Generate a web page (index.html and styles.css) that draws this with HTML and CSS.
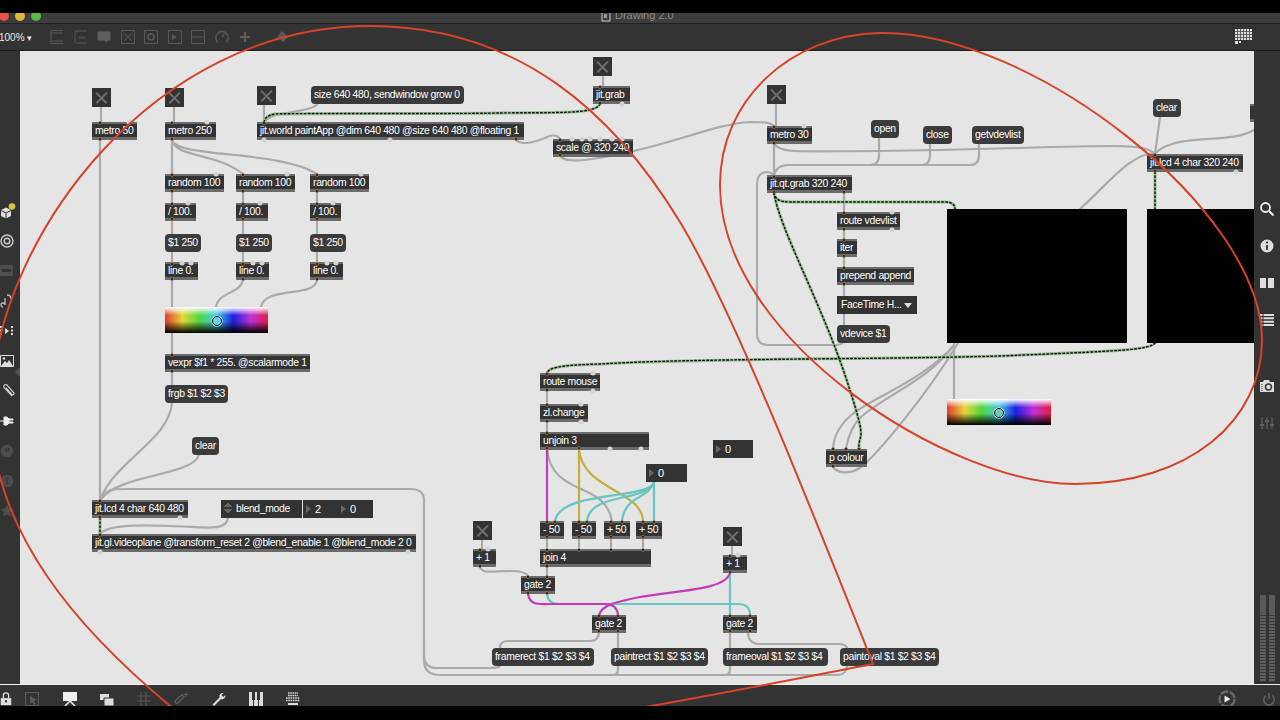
FILE: index.html
```html
<!DOCTYPE html>
<html>
  <head>
    <title>Drawing 2.0</title>
    <link rel="stylesheet" href="styles.css">
  </head>
  <body>
    <div class="app">
      <div class="black-bar top"></div>
      <div class="titlebar">
        <span class="light red"></span>
        <span class="light yellow"></span>
        <span class="light green"></span>
        <span class="title">
          <svg class="doc-icon" viewBox="0 0 10 12"><path d="M1 1h8v10H1z" fill="none" stroke="#ccc"/><path d="M3 4h3v4H3z" fill="#999"/></svg>
          Drawing 2.0
        </span>
      </div>

      <div class="toolbar">
        <div class="zoom">100% <span class="zoom-arrow">&#9662;</span></div>
        <div class="tools">
          <svg viewBox="0 0 14 14"><path d="M1 0.5h12M1 13.5h12M1 3h12M1 11h12M1 0.5v13" fill="none" stroke="#585858"/></svg>
          <svg viewBox="0 0 14 14"><path d="M13 1H3Q1 1 1 3v8q0 2 2 2h10M6 6v3M8 6v3M10 6v3" fill="none" stroke="#585858"/></svg>
          <svg viewBox="0 0 14 14"><path d="M0.5 1.5h13v9h-3l-1 2.500-2-2.500h-7z" fill="#5e5e5e"/></svg>
          <svg viewBox="0 0 14 14"><path d="M0.500 0.500h13v13h-13zM3 3l8 8M11 3l-8 8" fill="none" stroke="#585858"/></svg>
          <svg viewBox="0 0 14 14"><path d="M0.500 0.500h13v13h-13z" fill="none" stroke="#585858"/><circle cx="7" cy="7" r="3" fill="none" stroke="#585858" stroke-width="1.500"/></svg>
          <svg viewBox="0 0 14 14"><path d="M0.500 0.500h13v13h-13z" fill="none" stroke="#585858"/><path d="M4 4l5 3-5 3z" fill="#585858"/></svg>
          <svg viewBox="0 0 14 14"><path d="M0.500 0.500h13v13h-13zM0.500 7h13" fill="none" stroke="#585858"/></svg>
          <svg viewBox="0 0 14 14"><path d="M3 12.500A6.200 6.200 0 1 1 11 12.500M7 7l2.500-3.500" fill="none" stroke="#585858" stroke-width="1.400"/></svg>
          <svg viewBox="0 0 14 14"><path d="M7 2v10M2 7h10" fill="none" stroke="#5e5e5e" stroke-width="2.200"/></svg>
          <svg class="bucket" viewBox="0 0 14 14"><path d="M7 1l6 6-5 5-6-5zM1 6l-1 4h2z" fill="#5a5a5a"/></svg>
        </div>
        <svg class="grid-icon" viewBox="0 0 17 16">
          <path d="M0 0h17v11H0z" fill="#dcdcdc"/>
          <path d="M2.500 0v11M5.500 0v11M8.500 0v11M11.500 0v11M14.500 0v11M0 2.500h17M0 5.500h17M0 8.500h17" stroke="#333" stroke-width="0.700"/>
          <path d="M0 12h3v3H0zM4 12h2v2H4z" fill="#dcdcdc"/>
        </svg>
      </div>

      <div class="main">
        <div class="left-bar">
          <svg viewBox="0 0 16 16"><path d="M1 7l5-2.500 5 2.500-5 2.500zM1 8l4.500 2.200v5L1 13zM11 8l-4.500 2.200v5L11 13z" fill="#ddd"/><circle cx="12" cy="3.500" r="3.300" fill="#d8c53c"/></svg>
          <svg viewBox="0 0 16 16"><circle cx="7" cy="8" r="6" fill="none" stroke="#ccc" stroke-width="1.400"/><circle cx="7" cy="8" r="2.800" fill="none" stroke="#ccc" stroke-width="1.400"/></svg>
          <svg viewBox="0 0 16 16"><path d="M1 3h11v9H1zM1 5h11M1 10h11" fill="none" stroke="#5a5a5a" stroke-width="1.300"/></svg>
          <svg viewBox="0 0 16 16"><path d="M3 14a2 2 0 1 1 2-2V5M7 2c3 0 4 2 4 4" fill="none" stroke="#bbb" stroke-width="1.300"/></svg>
          <svg viewBox="0 0 16 16"><path d="M5 5l4 3-4 3z" fill="#ddd"/><path d="M1 3v10M12 3v10" stroke="#ddd" stroke-width="2" stroke-dasharray="2 1.500"/></svg>
          <svg viewBox="0 0 16 16"><path d="M0.500 2.500h13v11h-13z" fill="none" stroke="#ddd"/><path d="M1 13l4-5 2 2 2-3 4 6z" fill="#ddd"/><circle cx="4" cy="5.500" r="1.200" fill="#ddd"/></svg>
          <svg viewBox="0 0 16 16"><path d="M12 13L4 4.500a2 2 0 0 1 3-2.500l7 8a1.300 1.300 0 0 1-2 1.500L6 5" fill="none" stroke="#ccc" stroke-width="1.200"/></svg>
          <svg viewBox="0 0 16 16"><path d="M0 8h4M4 4h3l2 2h4v1h-4v2h4v1H9l-2 2H4z" fill="#eee" stroke="#eee"/></svg>
          <svg viewBox="0 0 16 16"><circle cx="7" cy="8" r="6.300" fill="#4c4c4c"/><path d="M6 5v4M9 5l-1 3" stroke="#333" stroke-width="1.200"/></svg>
          <svg viewBox="0 0 16 16"><circle cx="7" cy="8" r="6.300" fill="#4c4c4c"/><path d="M5 5h4M7 5v6" stroke="#333" stroke-width="1.200"/></svg>
          <svg viewBox="0 0 16 16"><path d="M7 1.500l1.900 4.300 4.600 0.400-3.500 3 1 4.600-4-2.400-4 2.400 1-4.600-3.500-3 4.600-0.400z" fill="#4f4f4f"/></svg>
          <span class="collapse-left"></span>
        </div>

        <div class="canvas">
          <div class="patch">
            <svg class="wires" viewBox="0 0 1280 720">
              <defs>
                <path id="j1" d="M600 104C595 115 550 112 500 113S290 113 275 114C268 115 265 118 264 122"/>
                <path id="j2" d="M774 193C776 203 785 202 800 202H945Q955 202 955 209"/>
                <path id="j3" d="M774 193C780 230 820 300 845 375S858 430 859 448"/>
                <path id="j4" d="M1155 343C1150 350 1120 351 1000 356 850 360 700 358 600 364 570 365 549 366 547 373"/>
                <path id="j5" d="M1155 172V209"/>
                <path id="j6" d="M100 518V534"/>
              </defs>
              <g class="cord">
                <path d="M101 107V122M100 140V500"/>
                <path d="M174 107V122M172 140V174M172 192V203M172 220V234M172 252V263M172 280V307M172 333V354M172 372V385"/>
                <path d="M172 140C176 158 215 152 243 174M172 140C176 158 280 150 317 174"/>
                <path d="M243 192V203M243 220V234M243 252V263M317 192V203M317 220V234M317 252V263"/>
                <path d="M243 280C240 294 218 292 216 307"/>
                <path d="M317 280C315 298 264 286 261 307"/>
                <path d="M172 402C170 440 115 460 100 500"/>
                <path d="M199 455C192 476 120 474 101 499"/>
                <path d="M103 497C106 490 112 489 125 489H410Q424 489 424 500V655Q424 668 437 668H490Q499 668 500 666"/>
                <path d="M424 640V660Q424 675 440 675H838Q846 675 847 666"/>
                <path d="M618 666V670Q618 675 612 675M730 666V670Q730 675 724 675"/>
                <path d="M228 518C226 532 205 527 170 526 130 524 106 526 100 534"/>
                <path d="M264 105V122"/>
                <path d="M318 103C312 114 270 110 265 122"/>
                <path d="M516 140C522 146 535 142 545 138 552 134 558 135 560 139"/>
                <path d="M560 156C566 164 590 160 620 154 680 142 715 124 750 122 762 122 770 122 774 126"/>
                <path d="M603 77V86M776 104V126M774 144V176"/>
                <path d="M774 144C782 154 800 151 880 151 980 150 1060 146 1115 146 1135 146 1150 148 1155 154"/>
                <path d="M774 176Q776 165 788 165H970Q979 165 979 155V144M879 137V155Q879 165 870 165M930 144V155Q930 165 922 165"/>
                <path d="M774 176C772 172 768 172 766 172 760 173 757 176 757 186V334Q757 345 768 345H835Q842 345 843 342"/>
                <path d="M844 193V212M844 230V239M844 257V267M844 285V296M844 314V325"/>
                <path d="M954 343V399"/>
                <path d="M954 345C930 375 880 395 855 412 842 422 834 434 833 448"/>
                <path d="M954 345C930 380 880 398 860 418 852 426 848 438 846 448"/>
                <path d="M833 467C838 474 850 474 860 468 880 452 930 390 958 343"/>
                <path d="M1080 209C1110 182 1130 154 1155 153"/>
                <path d="M1160 117L1155 154"/>
                <path d="M1254 130C1235 142 1195 136 1172 144 1162 147 1158 150 1155 154"/>
                <path d="M547 391V404M547 422V432"/>
                <path d="M547 449C552 498 605 480 612 521"/>
                <path d="M547 538V549M579 538V549M611 538V549M643 538V549M547 567V576M482 540V549"/>
                <path d="M480 567C482 574 492 571 510 571 520 571 526 572 528 576"/>
                <path d="M732 547V555"/>
                <path d="M599 632Q599 641 590 641H508Q500 641 500 648M618 632V648M730 632V648"/>
                <path d="M748 632Q748 644 760 644H838Q846 644 847 648"/>
              </g>
              <path class="cord-magenta" d="M547 449V521"/>
              <g class="cord-yellow">
                <path d="M579 449V521"/>
                <path d="M579 449C582 490 642 490 643 521"/>
              </g>
              <g class="cord-teal">
                <path d="M654 482C650 500 560 490 555 521"/>
                <path d="M654 482C648 502 590 492 587 521"/>
                <path d="M654 482C648 500 625 495 622 521"/>
                <path d="M654 482V521"/>
                <path d="M547 594Q548 604 560 604H738Q750 604 750 615"/>
                <path d="M730 573V615"/>
              </g>
              <g class="cord-magenta">
                <path d="M528 594C530 606 540 604 550 604H605Q617 604 618 615"/>
                <path d="M730 573C725 590 680 590 640 597 615 602 602 605 599 615"/>
              </g>
              <g class="jitter-base">
                <use href="#j1"/><use href="#j2"/><use href="#j3"/><use href="#j4"/><use href="#j5"/><use href="#j6"/>
              </g>
              <g class="jitter-dots">
                <use href="#j1"/><use href="#j2"/><use href="#j3"/><use href="#j4"/><use href="#j5"/><use href="#j6"/>
              </g>
            </svg>

            <div class="toggle t-a"></div>
            <div class="toggle t-b"></div>
            <div class="toggle t-c"></div>
            <div class="toggle t-d"></div>
            <div class="toggle t-e"></div>
            <div class="toggle t-f"></div>
            <div class="toggle t-g"></div>

            <div class="obj metro-50">metro 50</div>
            <div class="obj metro-250">metro 250</div>
            <div class="msg size-msg">size 640 480, sendwindow grow 0</div>
            <div class="obj jit-world">jit.world paintApp @dim 640 480 @size 640 480 @floating 1</div>
            <div class="obj jit-grab">jit.grab</div>
            <div class="obj scale-obj">scale @ 320 240</div>

            <div class="obj random-a">random 100</div>
            <div class="obj random-b">random 100</div>
            <div class="obj random-c">random 100</div>
            <div class="obj div-a">/ 100.</div>
            <div class="obj div-b">/ 100.</div>
            <div class="obj div-c">/ 100.</div>
            <div class="msg dur-a">$1 250</div>
            <div class="msg dur-b">$1 250</div>
            <div class="msg dur-c">$1 250</div>
            <div class="obj line-a">line 0.</div>
            <div class="obj line-b">line 0.</div>
            <div class="obj line-c">line 0.</div>

            <div class="swatch swatch-a"><span class="handle"></span></div>
            <div class="obj vexpr">vexpr $f1 * 255. @scalarmode 1</div>
            <div class="msg frgb">frgb $1 $2 $3</div>
            <div class="msg clear-a">clear</div>
            <div class="obj lcd-a">jit.lcd 4 char 640 480</div>
            <div class="box blend-menu"><span class="updown"></span>blend_mode</div>
            <div class="box num num-two">2</div>
            <div class="box num num-zero">0</div>
            <div class="obj videoplane">jit.gl.videoplane @transform_reset 2 @blend_enable 1 @blend_mode 2 0</div>

            <div class="obj metro-30">metro 30</div>
            <div class="msg open-msg">open</div>
            <div class="msg close-msg">close</div>
            <div class="msg getv-msg">getvdevlist</div>
            <div class="msg clear-b">clear</div>
            <div class="obj cut-obj"></div>
            <div class="obj lcd-b">jit.lcd 4 char 320 240</div>
            <div class="obj qt-grab">jit.qt.grab 320 240</div>
            <div class="obj route-v">route vdevlist</div>
            <div class="obj iter-obj">iter</div>
            <div class="obj prepend">prepend append</div>
            <div class="box facetime">FaceTime H...<span class="menu-arrow"></span></div>
            <div class="msg vdevice">vdevice $1</div>
            <div class="screen screen-a"></div>
            <div class="screen screen-b"></div>
            <div class="swatch swatch-b"><span class="handle"></span></div>
            <div class="obj p-colour">p colour</div>

            <div class="obj route-m">route mouse</div>
            <div class="obj zl-change">zl.change</div>
            <div class="obj unjoin">unjoin 3</div>
            <div class="box num num-a">0</div>
            <div class="box num num-b">0</div>
            <div class="obj minus-a">- 50</div>
            <div class="obj minus-b">- 50</div>
            <div class="obj plus-a">+ 50</div>
            <div class="obj plus-b">+ 50</div>
            <div class="obj join-4">join 4</div>
            <div class="obj inc-a">+ 1</div>
            <div class="obj inc-b">+ 1</div>
            <div class="obj gate-a">gate 2</div>
            <div class="obj gate-b">gate 2</div>
            <div class="obj gate-c">gate 2</div>
            <div class="msg framerect">framerect $1 $2 $3 $4</div>
            <div class="msg paintrect">paintrect $1 $2 $3 $4</div>
            <div class="msg frameoval">frameoval $1 $2 $3 $4</div>
            <div class="msg paintoval">paintoval $1 $2 $3 $4</div>

            <svg class="ports" viewBox="0 0 1280 720">
              <g class="port">
                <circle cx="100" cy="123" r="2"/><circle cx="100" cy="139" r="2"/>
                <circle cx="172" cy="123" r="2"/><circle cx="172" cy="139" r="2"/>
                <circle cx="264" cy="123" r="2"/><circle cx="516" cy="139" r="2"/>
                <circle cx="600" cy="87" r="2"/><circle cx="600" cy="103" r="2"/>
                <circle cx="560" cy="140" r="2"/><circle cx="560" cy="155" r="2"/>
                <circle cx="172" cy="175" r="2"/><circle cx="172" cy="191" r="2"/>
                <circle cx="243" cy="175" r="2"/><circle cx="243" cy="191" r="2"/>
                <circle cx="317" cy="175" r="2"/><circle cx="317" cy="191" r="2"/>
                <circle cx="172" cy="204" r="2"/><circle cx="172" cy="219" r="2"/>
                <circle cx="243" cy="204" r="2"/><circle cx="243" cy="219" r="2"/>
                <circle cx="317" cy="204" r="2"/><circle cx="317" cy="219" r="2"/>
                <circle cx="172" cy="264" r="2"/><circle cx="172" cy="279" r="2"/>
                <circle cx="243" cy="264" r="2"/><circle cx="243" cy="279" r="2"/>
                <circle cx="317" cy="264" r="2"/><circle cx="317" cy="279" r="2"/>
                <circle cx="172" cy="355" r="2"/><circle cx="172" cy="371" r="2"/>
                <circle cx="100" cy="501" r="2"/><circle cx="100" cy="517" r="2"/>
                <circle cx="100" cy="535" r="2"/>
                <circle cx="774" cy="127" r="2"/><circle cx="774" cy="143" r="2"/>
                <circle cx="774" cy="177" r="2"/><circle cx="774" cy="192" r="2"/><circle cx="844" cy="192" r="2"/>
                <circle cx="844" cy="213" r="2"/><circle cx="844" cy="229" r="2"/>
                <circle cx="844" cy="240" r="2"/><circle cx="844" cy="256" r="2"/>
                <circle cx="844" cy="268" r="2"/><circle cx="844" cy="284" r="2"/>
                <circle cx="833" cy="449" r="2"/><circle cx="846" cy="449" r="2"/><circle cx="859" cy="449" r="2"/><circle cx="833" cy="466" r="2"/>
                <circle cx="1155" cy="155" r="2"/><circle cx="1155" cy="171" r="2"/>
                <circle cx="547" cy="374" r="2"/><circle cx="547" cy="390" r="2"/>
                <circle cx="547" cy="405" r="2"/><circle cx="547" cy="421" r="2"/>
                <circle cx="547" cy="433" r="2"/><circle cx="547" cy="448" r="2"/><circle cx="579" cy="448" r="2"/>
                <circle cx="547" cy="522" r="2"/><circle cx="555" cy="522" r="2"/><circle cx="547" cy="537" r="2"/>
                <circle cx="579" cy="522" r="2"/><circle cx="587" cy="522" r="2"/><circle cx="579" cy="537" r="2"/>
                <circle cx="611" cy="522" r="2"/><circle cx="622" cy="522" r="2"/><circle cx="611" cy="537" r="2"/>
                <circle cx="643" cy="522" r="2"/><circle cx="654" cy="522" r="2"/><circle cx="643" cy="537" r="2"/>
                <circle cx="547" cy="550" r="2"/><circle cx="579" cy="550" r="2"/><circle cx="611" cy="550" r="2"/><circle cx="643" cy="550" r="2"/><circle cx="547" cy="566" r="2"/>
                <circle cx="480" cy="550" r="2"/><circle cx="480" cy="566" r="2"/>
                <circle cx="730" cy="556" r="2"/><circle cx="730" cy="572" r="2"/>
                <circle cx="528" cy="577" r="2"/><circle cx="547" cy="577" r="2"/><circle cx="528" cy="593" r="2"/><circle cx="547" cy="593" r="2"/>
                <circle cx="599" cy="616" r="2"/><circle cx="618" cy="616" r="2"/><circle cx="599" cy="631" r="2"/><circle cx="618" cy="631" r="2"/>
                <circle cx="730" cy="616" r="2"/><circle cx="750" cy="616" r="2"/><circle cx="730" cy="631" r="2"/><circle cx="750" cy="631" r="2"/>
              </g>
              <g class="port-free">
                <circle cx="129" cy="122" r="2.500"/><circle cx="207" cy="122" r="2.500"/>
                <circle cx="264" cy="140" r="2.500"/><circle cx="390" cy="140" r="2.500"/><circle cx="622" cy="104" r="2.500"/>
                <circle cx="216" cy="174" r="2.500"/><circle cx="287" cy="174" r="2.500"/><circle cx="361" cy="174" r="2.500"/>
                <circle cx="188" cy="203" r="2.500"/><circle cx="260" cy="203" r="2.500"/><circle cx="333" cy="203" r="2.500"/>
                <circle cx="182" cy="263" r="2.500"/><circle cx="191" cy="263" r="2.500"/>
                <circle cx="253" cy="263" r="2.500"/><circle cx="262" cy="263" r="2.500"/>
                <circle cx="327" cy="263" r="2.500"/><circle cx="336" cy="263" r="2.500"/>
                <circle cx="180" cy="518" r="2.500"/><circle cx="100" cy="552" r="2.500"/><circle cx="408" cy="552" r="2.500"/>
                <circle cx="572" cy="139" r="2.500"/><circle cx="582" cy="139" r="2.500"/><circle cx="590" cy="139" r="2.500"/><circle cx="600" cy="139" r="2.500"/><circle cx="612" cy="139" r="2.500"/><circle cx="622" cy="139" r="2.500"/>
                <circle cx="804" cy="126" r="2.500"/><circle cx="892" cy="212" r="2.500"/><circle cx="892" cy="230" r="2.500"/>
                <circle cx="593" cy="373" r="2.500"/><circle cx="593" cy="391" r="2.500"/>
                <circle cx="581" cy="404" r="2.500"/><circle cx="581" cy="422" r="2.500"/>
                <circle cx="610" cy="449" r="2.500"/><circle cx="641" cy="449" r="2.500"/>
                <circle cx="488" cy="549" r="2.500"/><circle cx="738" cy="555" r="2.500"/>
                <circle cx="1236" cy="172" r="2.500"/>
              </g>
            </svg>
          </div>
        </div>

        <div class="right-bar">
          <svg viewBox="0 0 16 16"><circle cx="6.500" cy="6.500" r="4.500" fill="none" stroke="#eee" stroke-width="1.800"/><path d="M10 10l4.500 4.500" stroke="#eee" stroke-width="2.200"/></svg>
          <svg viewBox="0 0 16 16"><circle cx="8" cy="8" r="6.500" fill="#ddd"/><path d="M8 7v5M8 3.500v2" stroke="#333" stroke-width="1.800"/></svg>
          <svg viewBox="0 0 16 16"><path d="M1 3h6v10H1zM9 3h6v10H9z" fill="#ddd"/></svg>
          <svg viewBox="0 0 16 16"><path d="M1 3h14M1 6.300h14M1 9.700h14M1 13h14" stroke="#ddd" stroke-width="2"/><path d="M4 2v12" stroke="#333"/></svg>
          <svg class="camera" viewBox="0 0 16 16"><path d="M1 4h3l1-2h5l1 2h4v10H1z" fill="#ddd"/><circle cx="9.500" cy="9" r="3" fill="#ddd" stroke="#333" stroke-width="1.500"/><path d="M3 6v7" stroke="#333" stroke-dasharray="1 1"/></svg>
          <svg viewBox="0 0 16 16"><path d="M3 2v12M8 2v12M13 2v12" stroke="#5e5e5e" stroke-width="1.300"/><path d="M1 9h4v2H1zM6 5h4v2H6zM11 9h4v2h-4z" fill="#5e5e5e"/></svg>
          <div class="meters"><span class="meter"></span><span class="meter"></span></div>
        </div>
      </div>

      <div class="bottombar">
        <svg viewBox="0 0 16 16"><path d="M2 7h12v8H2z" fill="#ddd"/><path d="M5 7V4a3 3 0 0 1 6 0v3" fill="none" stroke="#ddd" stroke-width="1.500"/><path d="M8 9v3" stroke="#333" stroke-width="2"/></svg>
        <svg viewBox="0 0 16 16"><path d="M1.500 1.500h13v13h-13z" fill="none" stroke="#5c5c5c"/><path d="M6 5l7 4-3 1 2 3-2 1-2-3-2 2z" fill="#5c5c5c"/></svg>
        <svg viewBox="0 0 16 16"><path d="M1 1h14v9H1z" fill="#eee"/><path d="M3 15l5-5 5 5" fill="none" stroke="#eee" stroke-width="1.500"/></svg>
        <svg viewBox="0 0 16 16"><path d="M1 3h9v6H1z" fill="#ddd"/><path d="M5 7h10v8H5z" fill="#ddd" stroke="#333"/></svg>
        <svg viewBox="0 0 16 16"><path d="M1 5h14M1 10h14M5 1v14M10 1v14" stroke="#555" stroke-width="1.200"/></svg>
        <svg viewBox="0 0 16 16"><path d="M3 9l6-5 2 2-6 6a1.500 1.500 0 0 1-2-3z" fill="none" stroke="#5c5c5c" stroke-width="1.400"/><path d="M13 1v5M10.500 3.500h5" stroke="#5c5c5c"/></svg>
        <svg viewBox="0 0 16 16"><path d="M1.500 13.500l7-7a3.500 3.500 0 0 1 4-4.500l-2 2 2 2 2-2a3.500 3.500 0 0 1-4.500 4l-7 7z" fill="#ddd"/></svg>
        <svg viewBox="0 0 16 16"><path d="M1 1h14v14H1z" fill="#ddd"/><path d="M5.500 1v14M10.500 1v14" stroke="#333"/><path d="M4 1h3v8H4zM9 1h3v8H9z" fill="#333"/></svg>
        <svg viewBox="0 0 16 16"><path d="M3 2h10M3 4.500h10M1 7h14M1 9.500h14" stroke="#ddd" stroke-width="1.600" stroke-dasharray="1.600 0.700"/><path d="M3 13h10" stroke="#ddd" stroke-width="2"/></svg>
        <svg class="play-icon" viewBox="0 0 18 18"><circle cx="9" cy="9" r="7.500" fill="none" stroke="#666" stroke-width="2.400" stroke-dasharray="8 1.500"/><path d="M6.500 5.500l6 3.500-6 3.500z" fill="#eee"/></svg>
        <svg class="power-icon" viewBox="0 0 16 16"><path d="M4.500 4a6 6 0 1 0 7 0M8 1v7" fill="none" stroke="#666" stroke-width="1.500"/></svg>
      </div>
      <div class="black-bar bottom"></div>
    </div>

    <svg class="annotations" viewBox="0 13 1280 693">
      <path d="M175 710C90 640 -20 530 -8 390 0 240 150 26 370 26 520 26 615 115 680 222 730 305 800 480 873 664 800 678 720 694 640 708"/>
      <path d="M880 33C1030 30 1262 210 1262 340 1262 420 1190 484 1075 484 950 484 720 340 720 185 720 100 790 35 880 33Z"/>
    </svg>
  </body>
</html>
```

FILE: styles.css
```css
/* Reset */
body {
  margin: 0;
  overflow: hidden;
  background-color: #000;
  font-family: "Liberation Sans", Arial, sans-serif;
}

.app {
  display: flex;
  flex-direction: column;
  width: 1280px;
  height: 720px;
}

.black-bar {
  background-color: #000;
}
.black-bar.top {
  height: 13px;
}
.black-bar.bottom {
  height: 14px;
}

/* Window title */
.titlebar {
  display: flex;
  align-items: center;
  gap: 6px;
  box-sizing: border-box;
  height: 11px;
  padding-bottom: 5px;
  background-color: #3d3d3d;
  border-bottom: 1px solid #222;
  overflow: hidden;
}
.light {
  flex: none;
  width: 10px;
  height: 10px;
  border-radius: 50%;
}
.light.red {
  margin-left: -1px;
  background-color: #e5534b;
}
.light.yellow {
  background-color: #dcb83c;
}
.light.green {
  background-color: #5cb84a;
}
.title {
  display: flex;
  align-items: center;
  gap: 4px;
  margin-left: 554px;
  color: #8a8a8a;
  font-size: 11px;
  line-height: 11px;
}
.doc-icon {
  width: 10px;
  height: 12px;
}

/* Toolbar */
.toolbar {
  display: flex;
  align-items: center;
  height: 26px;
  background-color: #333;
  border-bottom: 1px solid #1c1c1c;
}
.zoom {
  width: 51px;
  color: #e8e8e8;
  font-size: 10px;
  margin-left: -1px;
}
.zoom-arrow {
  font-size: 9px;
}
.tools {
  display: flex;
  gap: 9.5px;
}
.tools svg {
  width: 14px;
  height: 14px;
}
.tools .bucket {
  margin-left: 13px;
}
.grid-icon {
  width: 17px;
  height: 16px;
  margin-left: auto;
  margin-right: 28px;
}

/* Main row */
.main {
  display: flex;
  height: 633px;
}
.left-bar {
  position: relative;
  display: flex;
  flex-direction: column;
  gap: 14px;
  flex: none;
  box-sizing: border-box;
  width: 20px;
  padding-top: 152px;
  background-color: #333;
  overflow: hidden;
}
.left-bar svg {
  flex: none;
  width: 16px;
  height: 16px;
}
.collapse-left {
  position: absolute;
  left: 15px;
  top: 315px;
  border: 6px solid transparent;
  border-left: none;
  border-right: 6px solid #555;
}
.right-bar {
  display: flex;
  flex-direction: column;
  align-items: center;
  gap: 21px;
  flex: none;
  box-sizing: border-box;
  width: 26px;
  padding-top: 150px;
  background-color: #333;
}
.right-bar svg {
  flex: none;
  width: 16px;
  height: 16px;
}
.right-bar .camera {
  margin-top: 29px;
}
.meters {
  display: flex;
  gap: 3px;
  margin-top: auto;
  margin-bottom: 2px;
}
.meter {
  width: 6px;
  height: 87px;
  background: linear-gradient(#5a5a5a 19px, transparent 19px),
    repeating-linear-gradient(#5e5e5e 0, #5e5e5e 2px, #3a3a3a 2px, #3a3a3a 3px);
}

/* Patcher canvas */
.canvas {
  position: relative;
  flex: 1;
  background-color: #e5e5e5;
  overflow: hidden;
}
.patch {
  position: absolute;
  left: -20px;
  top: -51px;
  width: 1280px;
  height: 720px;
  color: #fff;
  font-size: 10.4px;
  letter-spacing: -0.33px;
}
.wires,
.ports {
  position: absolute;
  left: 0;
  top: 0;
  width: 1280px;
  height: 720px;
}
.wires path {
  fill: none;
  stroke-linecap: round;
}
.cord path {
  stroke: #aaa;
  stroke-width: 2.2;
}
.cord-magenta,
.cord-magenta path {
  stroke: #c23cb8;
  stroke-width: 2.2;
}
.cord-yellow path {
  stroke: #c4ae3e;
  stroke-width: 2.2;
}
.cord-teal path {
  stroke: #66c6c2;
  stroke-width: 2.2;
}
.jitter-base {
  stroke: #8fb98c;
  stroke-width: 3;
}
.jitter-dots {
  stroke: #111;
  stroke-width: 1.4;
  stroke-dasharray: 1.5 2.5;
}
.port circle {
  fill: #2a2418;
  stroke: #a8875a;
  stroke-width: 0.6;
  r: 1.6px;
}
.port-free circle {
  fill: #d4d4d4;
}

/* Patcher objects */
.obj,
.msg,
.box,
.toggle,
.screen,
.swatch {
  position: absolute;
  box-sizing: border-box;
}
.obj,
.msg,
.box {
  padding-left: 3px;
  white-space: nowrap;
  overflow: hidden;
}
.obj {
  height: 18px;
  background-color: #333;
  border-top: 2px solid #6b6b6b;
  border-bottom: 3px solid #6b6b6b;
  line-height: 13px;
}
.msg {
  height: 18px;
  background-color: #3b3b3b;
  border-radius: 4px;
  line-height: 18px;
}
.box {
  height: 18px;
  background-color: #333;
  line-height: 18px;
}
.toggle {
  width: 19px;
  height: 19px;
  background-color: #333;
}
.toggle::before,
.toggle::after {
  content: "";
  position: absolute;
  left: 2px;
  top: 9px;
  width: 15px;
  height: 1.5px;
  background-color: #6e6e6e;
  transform: rotate(45deg);
}
.toggle::after {
  transform: rotate(-45deg);
}
.num {
  padding-left: 12px;
  font-size: 11px;
}
.num::before {
  content: "";
  position: absolute;
  left: 3px;
  top: 5px;
  border: 4px solid transparent;
  border-right: none;
  border-left: 5px solid #686868;
}
.updown {
  display: inline-block;
  width: 8px;
  height: 12px;
  margin-right: 4px;
  vertical-align: -2px;
  background: linear-gradient(to bottom right, transparent 50%, #666 50%) 0 0 / 4px 5px no-repeat,
    linear-gradient(to bottom left, transparent 50%, #666 50%) 4px 0 / 4px 5px no-repeat,
    linear-gradient(to top right, transparent 50%, #666 50%) 0 7px / 4px 5px no-repeat,
    linear-gradient(to top left, transparent 50%, #666 50%) 4px 7px / 4px 5px no-repeat;
}
.menu-arrow {
  position: absolute;
  right: 5px;
  top: 7px;
  border: 4px solid transparent;
  border-bottom: none;
  border-top: 5px solid #ddd;
}
.screen {
  background-color: #000;
}
.swatch {
  height: 26px;
  background: linear-gradient(to bottom, #fff 0, rgba(255, 255, 255, 0) 32%, rgba(0, 0, 0, 0) 55%, #000 100%),
    linear-gradient(to right, #e03a30 0, #e6d63c 17%, #55d840 33%, #40c8e8 50%, #1a20e0 66%, #c030d8 83%, #e02040 100%);
}
.handle {
  position: absolute;
  left: 47px;
  top: 9px;
  box-sizing: border-box;
  width: 10px;
  height: 10px;
  border-radius: 50%;
  background-color: #62d8e6;
  border: 1.5px solid #000;
  box-shadow: 0 0 0 0.5px #fff;
}
.swatch-b .handle {
  background-color: #68cfb0;
}

/* Object places on the patcher */
.t-a { left: 92px; top: 88px; }
.t-b { left: 165px; top: 88px; }
.t-c { left: 257px; top: 86px; }
.t-d { left: 593px; top: 57px; }
.t-e { left: 767px; top: 85px; }
.t-f { left: 473px; top: 521px; }
.t-g { left: 723px; top: 527px; }

.metro-50 { left: 92px; top: 122px; width: 45px; }
.metro-250 { left: 165px; top: 122px; width: 51px; }
.size-msg { left: 311px; top: 86px; width: 153px; }
.jit-world { left: 257px; top: 122px; width: 267px; }
.jit-grab { left: 593px; top: 86px; width: 37px; }
.scale-obj { left: 553px; top: 139px; width: 80px; }

.random-a { left: 165px; top: 174px; width: 59px; }
.random-b { left: 236px; top: 174px; width: 59px; }
.random-c { left: 310px; top: 174px; width: 59px; }
.div-a { left: 165px; top: 203px; width: 31px; }
.div-b { left: 236px; top: 203px; width: 32px; }
.div-c { left: 310px; top: 203px; width: 31px; }
.dur-a { left: 165px; top: 234px; width: 36px; }
.dur-b { left: 236px; top: 234px; width: 36px; }
.dur-c { left: 310px; top: 234px; width: 36px; }
.line-a { left: 165px; top: 262px; width: 33px; }
.line-b { left: 236px; top: 262px; width: 33px; }
.line-c { left: 310px; top: 262px; width: 33px; }

.swatch-a { left: 165px; top: 307px; width: 103px; }
.vexpr { left: 165px; top: 354px; width: 145px; }
.frgb { left: 165px; top: 385px; width: 63px; }
.clear-a { left: 192px; top: 437px; width: 27px; }
.lcd-a { left: 92px; top: 500px; width: 96px; }
.blend-menu { left: 221px; top: 500px; width: 81px; }
.num-two { left: 303px; top: 500px; width: 35px; }
.num-zero { left: 338px; top: 500px; width: 35px; }
.videoplane { left: 92px; top: 534px; width: 324px; }

.metro-30 { left: 767px; top: 126px; width: 45px; }
.open-msg { left: 871px; top: 120px; width: 28px; }
.close-msg { left: 923px; top: 126px; width: 29px; }
.getv-msg { left: 972px; top: 126px; width: 52px; }
.clear-b { left: 1153px; top: 99px; width: 28px; }
.cut-obj { left: 1250px; top: 104px; width: 10px; }
.lcd-b { left: 1147px; top: 154px; width: 96px; }
.qt-grab { left: 767px; top: 175px; width: 85px; }
.route-v { left: 837px; top: 212px; width: 63px; }
.iter-obj { left: 837px; top: 239px; width: 20px; }
.prepend { left: 837px; top: 267px; width: 77px; }
.facetime { left: 837px; top: 296px; width: 80px; padding-left: 4px; }
.vdevice { left: 837px; top: 325px; width: 53px; }
.screen-a { left: 947px; top: 209px; width: 180px; height: 134px; }
.screen-b { left: 1147px; top: 209px; width: 120px; height: 134px; }
.swatch-b { left: 947px; top: 399px; width: 104px; }
.p-colour { left: 826px; top: 449px; width: 41px; }

.route-m { left: 540px; top: 373px; width: 60px; }
.zl-change { left: 540px; top: 404px; width: 48px; }
.unjoin { left: 540px; top: 432px; width: 109px; }
.num-a { left: 713px; top: 440px; width: 40px; }
.num-b { left: 646px; top: 464px; width: 41px; }
.minus-a { left: 540px; top: 521px; width: 24px; }
.minus-b { left: 572px; top: 521px; width: 24px; }
.plus-a { left: 604px; top: 521px; width: 26px; }
.plus-b { left: 636px; top: 521px; width: 26px; }
.join-4 { left: 540px; top: 549px; width: 111px; }
.inc-a { left: 473px; top: 549px; width: 23px; }
.inc-b { left: 723px; top: 555px; width: 24px; }
.gate-a { left: 521px; top: 576px; width: 34px; }
.gate-b { left: 592px; top: 615px; width: 34px; }
.gate-c { left: 723px; top: 615px; width: 34px; }
.framerect { left: 492px; top: 648px; width: 102px; }
.paintrect { left: 611px; top: 648px; width: 97px; }
.frameoval { left: 723px; top: 648px; width: 105px; }
.paintoval { left: 840px; top: 648px; width: 99px; }

/* Bottom bar */
.bottombar {
  display: flex;
  align-items: center;
  gap: 21.3px;
  box-sizing: border-box;
  height: 22px;
  padding-top: 6px;
  background-color: #333;
  border-top: 1px solid #f0f0f0;
}
.bottombar svg {
  flex: none;
  width: 16px;
  height: 16px;
}
.bottombar svg:first-child {
  width: 14px;
  height: 14px;
  margin-left: -1px;
  margin-right: -10px;
}
.bottombar .play-icon {
  width: 18px;
  height: 18px;
  margin-left: auto;
}
.bottombar .power-icon {
  margin-left: 5px;
  margin-right: 4px;
  width: 14px;
  height: 14px;
}

/* Red hand drawn circles on top of everything */
.annotations {
  position: absolute;
  left: 0;
  top: 13px;
  width: 1280px;
  height: 693px;
}
.annotations path {
  fill: none;
  stroke: #d5432a;
  stroke-width: 2;
}
```
